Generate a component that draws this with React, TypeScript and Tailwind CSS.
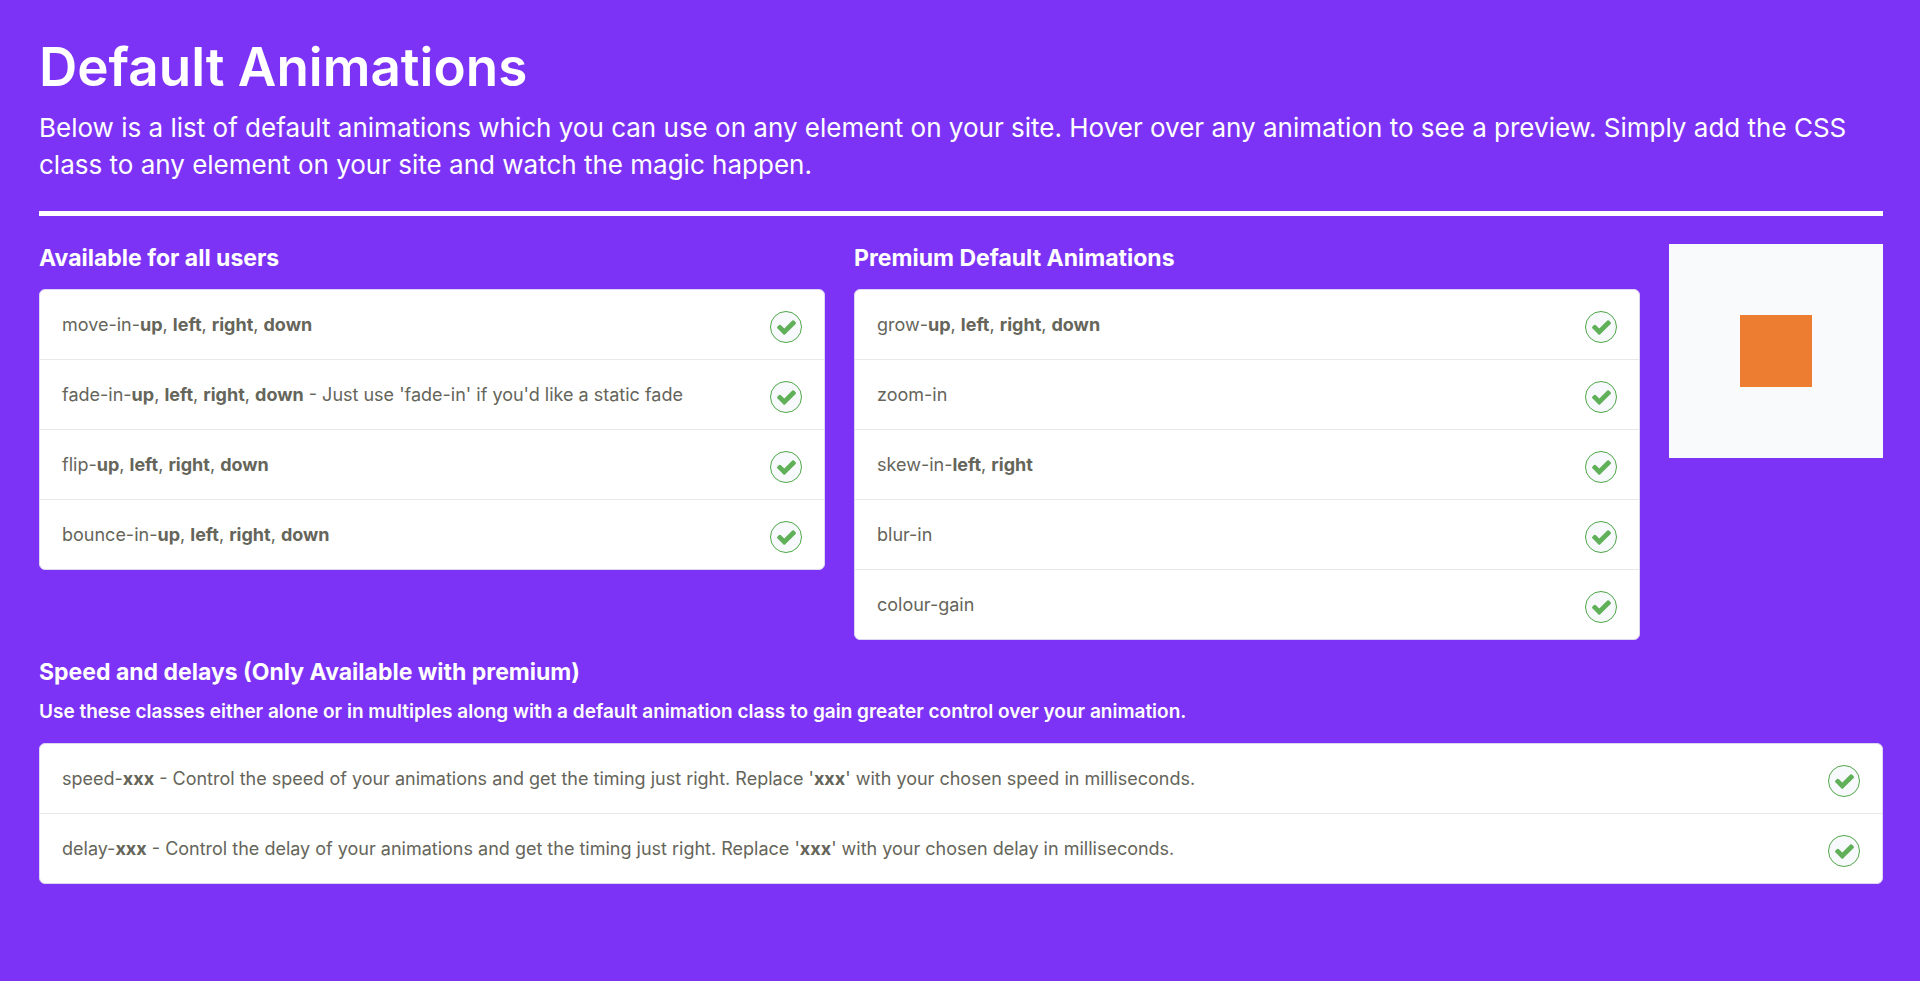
import React from "react";

const Check = () => {
  return (
    <span className="flex h-8 w-8 shrink-0 items-center justify-center rounded-full border border-[#4fa848] bg-[#f8f9fc]">
      <svg viewBox="121 334 1550 1188" className="h-[15px] w-[19px] fill-[#5fb058]" aria-hidden="true">
        <path d="M1671 566q0 40-28 68l-724 724-136 136q-28 28-68 28t-68-28l-136-136-362-362q-28-28-28-68t28-68l136-136q28-28 68-28t68 28l294 295 656-657q28-28 68-28t68 28l136 136q28 28 28 68z" />
      </svg>
    </span>
  );
};

// the bold part of a class name lists the directions it can take
const Directions = ({ names }: { names: string[] }) => {
  return (
    <>
      {names.map((name, i) => (
        <React.Fragment key={name}>
          {i > 0 && ", "}
          <strong>{name}</strong>
        </React.Fragment>
      ))}
    </>
  );
};

const List = ({ children }: { children: React.ReactNode }) => {
  return (
    <ul className="divide-y divide-[#e7e8ec] rounded-md border border-[#dcd6f0] bg-white">
      {children}
    </ul>
  );
};

const Item = ({ children }: { children: React.ReactNode }) => {
  return (
    <li className="flex items-center justify-between px-[22px] pt-[21px] pb-4">
      <span className="pb-1 text-[18px] leading-7 text-[#65655a]">{children}</span>
      <Check />
    </li>
  );
};

const all = ["up", "left", "right", "down"];

function App() {
  return (
    <div className="min-h-screen bg-[#7d33f5] pt-9 pr-[37px] pb-16 pl-[39px] font-['Inter',sans-serif] text-white">
      <h1 className="text-[53px] leading-[62px] font-semibold">Default Animations</h1>
      <p className="mt-[11px] text-[26px] leading-[37px]">
        Below is a list of default animations which you can use on any element on your site. Hover
        over any animation to see a preview. Simply add the CSS class to any element on your site
        and watch the magic happen.
      </p>
      <hr className="mt-7 border-t-5 border-white" />

      <div className="mt-7 flex items-start gap-[29px]">
        <section className="flex-1">
          <h2 className="mb-[17px] text-[23px] leading-7 font-bold">Available for all users</h2>
          <List>
            <Item>
              move-in-
              <Directions names={all} />
            </Item>
            <Item>
              fade-in-
              <Directions names={all} /> - Just use 'fade-in' if you'd like a static fade
            </Item>
            <Item>
              flip-
              <Directions names={all} />
            </Item>
            <Item>
              bounce-in-
              <Directions names={all} />
            </Item>
          </List>
        </section>

        <section className="flex-1">
          <h2 className="mb-[17px] text-[23px] leading-7 font-bold">Premium Default Animations</h2>
          <List>
            <Item>
              grow-
              <Directions names={all} />
            </Item>
            <Item>zoom-in</Item>
            <Item>
              skew-in-
              <Directions names={["left", "right"]} />
            </Item>
            <Item>blur-in</Item>
            <Item>colour-gain</Item>
          </List>
        </section>

        {/* preview box */}
        <div className="flex h-[214px] w-[214px] shrink-0 items-center justify-center bg-[#f8fafc]">
          <div className="h-[72px] w-[72px] bg-[#ed7d31]"></div>
        </div>
      </div>

      <section className="mt-[18px]">
        <h2 className="text-[23px] leading-7 font-bold">
          Speed and delays (Only Available with premium)
        </h2>
        <p className="mt-3 mb-[17px] text-[19px] leading-7 font-semibold">
          Use these classes either alone or in multiples along with a default animation class to
          gain greater control over your animation.
        </p>
        <List>
          <Item>
            speed-<strong>xxx</strong> - Control the speed of your animations and get the timing
            just right. Replace '<strong>xxx</strong>' with your chosen speed in milliseconds.
          </Item>
          <Item>
            delay-<strong>xxx</strong> - Control the delay of your animations and get the timing
            just right. Replace '<strong>xxx</strong>' with your chosen delay in milliseconds.
          </Item>
        </List>
      </section>
    </div>
  );
}

export default App;
